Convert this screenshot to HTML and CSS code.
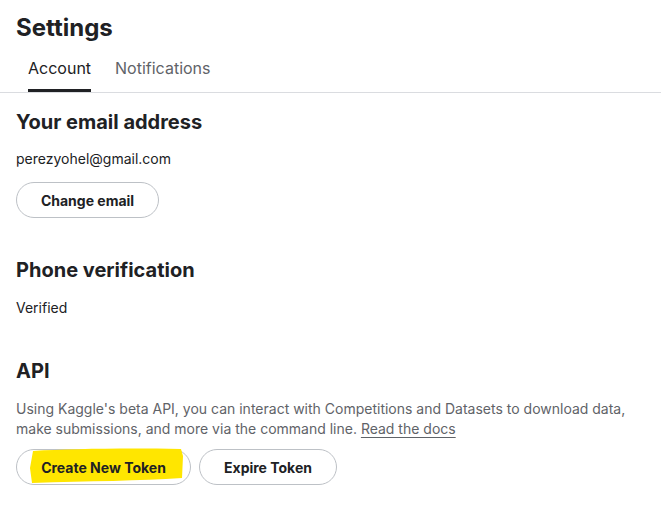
FILE: index.html
```html
<!DOCTYPE html>
<html>
<head>
<meta charset="utf-8">
<link rel="stylesheet" href="styles.css">
</head>
<body>
<header class="page-header">
  <h1 class="page-title">Settings</h1>
  <nav class="tabs">
    <span class="tab tab-active">Account</span>
    <span class="tab">Notifications</span>
  </nav>
</header>
<main class="content">
  <section class="section section-email">
    <h2 class="section-title">Your email address</h2>
    <p class="text text-email">perezyohel@gmail.com</p>
    <div class="actions actions-email">
      <button class="btn btn-email">Change email</button>
    </div>
  </section>
  <section class="section section-phone">
    <h2 class="section-title">Phone verification</h2>
    <p class="text text-phone">Verified</p>
  </section>
  <section class="section section-api">
    <h2 class="section-title">API</h2>
    <p class="text text-muted">Using Kaggle's beta API, you can interact with Competitions and Datasets to download data, make submissions, and more via the command line. <a class="link">Read the docs</a></p>
    <div class="actions actions-api">
      <button class="btn btn-create">
        <svg class="highlight" viewBox="0 0 154 36" preserveAspectRatio="none"><path d="M3 3 C40 1 90 0 151 1 L153 8 L152 30 C110 33 60 33 2 35 L0 20 Z" fill="#ffe600"/></svg>
        <span class="btn-label">Create New Token</span>
      </button>
      <button class="btn btn-expire">Expire Token</button>
    </div>
  </section>
</main>
</body>
</html>
```

FILE: styles.css
```css
html, body {
  margin: 0;
  padding: 0;
  background: #ffffff;
}
body {
  font-family: Inter, "Noto Sans", "Liberation Sans", sans-serif;
  color: #202124;
  width: 661px;
  overflow: hidden;
}
.page-header {
  border-bottom: 1px solid #dadce0;
}
.page-title {
  margin: 0;
  padding: 13px 16px 0 16px;
  font-size: 24px;
  line-height: 30px;
  font-weight: 700;
  color: #202124;
}
.tabs {
  display: flex;
  padding: 0 16px;
  margin-top: 15px;
}
.tab {
  margin: 0 12px;
  font-size: 16px;
  line-height: 20px;
  padding-bottom: 11px;
  color: #5f6368;
  border-bottom: 3px solid transparent;
}
.tab-active {
  color: #202124;
  border-bottom-color: #202124;
}
.content {
  padding: 0 16px;
}
.section-title {
  margin: 0;
  font-size: 20px;
  line-height: 24px;
  font-weight: 700;
  color: #202124;
}
.section-email {
  padding-top: 17px;
}
.section-phone {
  padding-top: 40px;
}
.section-api {
  padding-top: 41px;
}
.text {
  margin: 0;
  font-size: 14px;
  line-height: 20px;
  color: #202124;
}
.text-email {
  margin-top: 15px;
}
.text-phone {
  margin-top: 16px;
}
.text-muted {
  color: #5f6368;
  margin-top: 16px;
}
.link {
  color: #5f6368;
  text-decoration: underline;
  text-underline-offset: 3px;
  text-decoration-color: #5f6368;
}
.actions {
  display: flex;
  gap: 8px;
}
.actions-email {
  margin-top: 13px;
}
.actions-api {
  margin-top: 10px;
}
.btn {
  position: relative;
  height: 36px;
  border: 1px solid #bdc1c6;
  border-radius: 18px;
  background: #ffffff;
  font-family: Inter, "Noto Sans", "Liberation Sans", sans-serif;
  font-size: 14px;
  font-weight: 700;
  color: #202124;
  padding: 0;
  white-space: nowrap;
  box-sizing: border-box;
}
.btn-email {
  width: 143px;
}
.btn-create {
  width: 175px;
}
.btn-expire {
  width: 138px;
}
.highlight {
  position: absolute;
  left: 13px;
  top: -2px;
  width: 154px;
  height: 36px;
}
.btn-label {
  position: relative;
}
```
